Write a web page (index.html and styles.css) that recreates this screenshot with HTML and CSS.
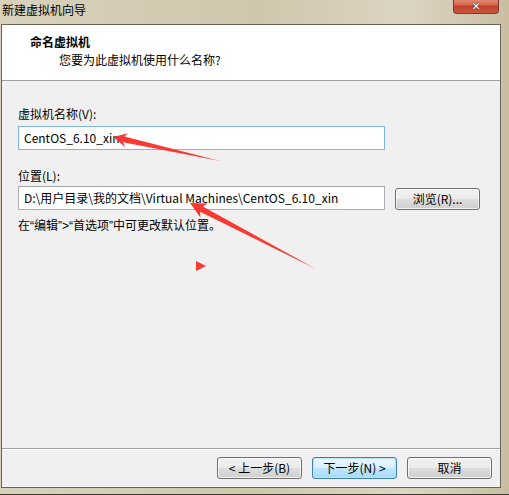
FILE: index.html
```html
<!DOCTYPE html>
<html>
<head>
<meta charset="utf-8">
<link rel="stylesheet" href="styles.css">
</head>
<body>
<div class="window">
  <div class="titlebar">
    <span class="title">新建虚拟机向导</span>
    <div class="close"><span class="x">✕</span></div>
  </div>
  <div class="client">
    <div class="header">
      <div class="h-title">命名虚拟机</div>
      <div class="h-sub">您要为此虚拟机使用什么名称?</div>
    </div>
    <div class="body">
      <div class="label first">虚拟机名称(V):</div>
      <div class="input focused">CentOS_6.10_xin</div>
      <div class="label second">位置(L):</div>
      <div class="row">
        <div class="input">D:\用户目录\我的文档\Virtual Machines\CentOS_6.10_xin</div>
        <div class="btn browse">浏览(R)...</div>
      </div>
      <div class="hint">在<span class="q">“</span>编辑<span class="q">”&gt;“</span>首选项<span class="q">”</span>中可更改默认位置。</div>
    </div>
    <div class="footer">
      <div class="btn">&lt; 上一步(B)</div>
      <div class="btn default">下一步(N) &gt;</div>
      <div class="btn">取消</div>
    </div>
  </div>
  <div class="bottomframe"></div>
  <svg class="arrows" width="509" height="495" viewBox="0 0 509 495">
    <polygon fill="#f93a34" points="113,137 128.1,133.2 124.4,136.5 220,161 123,142.3 125.1,146.9"/>
    <polygon fill="#f93a34" points="190,203 207.8,203.4 202.9,206.5 316,269 200.1,211.8 200.4,217.6"/>
    <polygon fill="#f93a34" points="196,261 206,266 196,271"/>
  </svg>
</div>
</body>
</html>
```

FILE: styles.css
```css
html, body {
  margin: 0;
  padding: 0;
  background: #2f5f66;
}
.window {
  position: relative;
  width: 509px;
  height: 495px;
  background: linear-gradient(90deg, #d9d1bc 0%, #cfc6ac 50%, #dcd5c2 80%, #c9bea2 100%);
  font-family: "Noto Sans CJK SC", "Microsoft YaHei", sans-serif;
  font-size: 12px;
  color: #000;
  overflow: hidden;
}
.titlebar {
  height: 24px;
  position: relative;
}
.title {
  position: absolute;
  left: 2px;
  top: 2px;
  font-size: 12px;
  line-height: 16px;
  color: #000;
}
.close {
  position: absolute;
  left: 453px;
  top: -2px;
  width: 46px;
  height: 16px;
  border: 1px solid #7a3a2c;
  border-top: none;
  border-radius: 0 0 4px 4px;
  background: linear-gradient(180deg, #e4957f 0%, #d5674c 45%, #c3402a 55%, #c75a3f 100%);
  box-sizing: border-box;
  display: flex;
  justify-content: center;
  align-items: center;
}
.x {
  color: #fff;
  font-family: "DejaVu Sans", sans-serif;
  font-size: 11px;
  font-weight: bold;
  line-height: 11px;
  margin-top: 1px;
  text-shadow: 0 0 1px #333, 0 0 1px #333;
}
.client {
  margin-left: 1px;
  width: 500px;
  height: 464px;
  box-sizing: border-box;
  border: 1px solid #67655b;
  background: #f0f0f0;
  display: flex;
  flex-direction: column;
}
.header {
  height: 56px;
  background: #fff;
  border-bottom: 1px solid #a0a0a0;
  box-sizing: border-box;
  padding-left: 28px;
  padding-top: 8px;
}
.h-title {
  font-weight: bold;
  line-height: 17px;
}
.h-sub {
  margin-top: 1px;
  padding-left: 29px;
  line-height: 17px;
}
.body {
  flex: 1;
  padding-left: 16px;
  border-bottom: 1px solid #a0a0a0;
  box-shadow: 0 1px 0 #fff;
}
.label {
  line-height: 16px;
}
.label.first {
  margin-top: 25px;
}
.label.second {
  margin-top: 18px;
}
.input {
  margin-top: 4px;
  width: 367px;
  height: 24px;
  box-sizing: border-box;
  border: 1px solid #abadb3;
  border-top-color: #a4a6ab;
  background: #fff;
  padding-left: 5px;
  line-height: 22px;
  white-space: nowrap;
}
.input.focused {
  border-color: #7eb4ea;
}
.row {
  display: flex;
  align-items: center;
  gap: 10px;
  margin-top: 2px;
}
.row .input {
  margin-top: 0;
}
.btn {
  width: 85px;
  height: 22px;
  box-sizing: border-box;
  border: 1px solid #707070;
  border-radius: 3px;
  background: linear-gradient(180deg, #f2f2f2 0%, #ebebeb 48%, #dddddd 52%, #cfcfcf 100%);
  text-align: center;
  line-height: 20px;
  box-shadow: inset 0 0 0 1px rgba(255,255,255,0.7);
}
.browse {
  margin-top: 1px;
}
.hint {
  margin-top: 7px;
  line-height: 16px;
}
.q {
  font-family: "Liberation Sans", sans-serif;
}
.footer {
  height: 38px;
  display: flex;
  justify-content: flex-end;
  align-items: flex-start;
  padding-top: 8px;
  padding-right: 8px;
  box-sizing: border-box;
  gap: 10px;
}
.btn.default {
  border-color: #3c7fb1;
  background: linear-gradient(180deg, #eaf6fd 0%, #d9f0fc 48%, #bee6fd 52%, #a7d9f5 100%);
  box-shadow: inset 0 0 0 1px #bfe3f7;
}
.bottomframe {
  height: 6px;
  border-bottom: 1px solid #3a3a30;
}
.arrows {
  position: absolute;
  left: 0;
  top: 0;
  pointer-events: none;
}
```
